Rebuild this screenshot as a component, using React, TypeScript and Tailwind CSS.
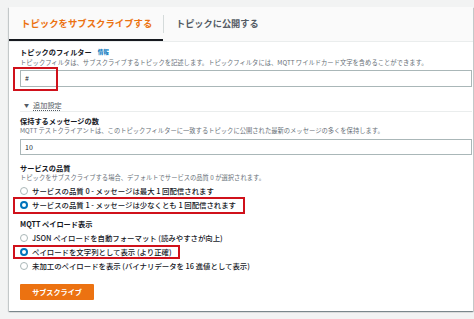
import React from 'react';

const font = { fontFamily: '"Noto Sans CJK JP", "Noto Sans", sans-serif' };

const Radio: React.FC<{ checked?: boolean; label: string }> = ({ checked, label }) => (
  <div className="flex h-[14px] items-center">
    {checked ? (
      <span className="box-border h-[8px] w-[8px] rounded-full border-[2.5px] border-[#0073bb] bg-white" />
    ) : (
      <span className="box-border h-[8px] w-[8px] rounded-full border border-[#aab7b8] bg-white" />
    )}
    <span className="ml-[4px] text-[7.4px] font-medium leading-[10px] text-[#16191f]">{label}</span>
  </div>
);

const App: React.FC = () => {
  return (
    <div className="h-[319px] w-[474px] overflow-hidden bg-[#f2f3f3] pt-[7px] pl-[9px] pr-[1px]" style={font}>
      <div className="bg-white shadow-[0_1px_1px_0_rgba(0,28,36,0.3),1px_1px_1px_0_rgba(0,28,36,0.15),-1px_1px_1px_0_rgba(0,28,36,0.15)]">
        {/* tabs */}
        <div className="flex h-[35px] border-b border-[#eaeded] bg-[#fafafa]">
          <div className="flex h-full w-[154px] items-center border-b-2 border-[#16191f] pl-[12px]">
            <span className="text-[9.4px] font-bold text-[#ec7211]">トピックをサブスクライブする</span>
          </div>
          <div className="my-[8px] w-px bg-[#d5dbdb]" />
          <div className="flex items-center pl-[12px]">
            <span className="text-[9.2px] font-bold text-[#545b64]">トピックに公開する</span>
          </div>
        </div>

        <div className="pl-[11px] pr-[1px] pb-[11px]">
          {/* filter */}
          <div className="flex h-[10px] items-center pt-0 mt-[5px]">
            <span className="text-[7.2px] font-semibold leading-[10px] text-[#16191f]">トピックのフィルター</span>
            <span className="ml-[6px] text-[5.6px] font-bold leading-[10px] text-[#0073bb]">情報</span>
          </div>
          <div className="mt-[1px] text-[6.3px] leading-[10px] text-[#687078]">
            トピックフィルタは、サブスクライブするトピックを記述します。トピックフィルタには、MQTT ワイルドカード文字を含めることができます。
          </div>
          <div className="relative mt-[2px]">
            <div className="flex h-[17px] items-center border border-[#aab7b8] pl-[4px] text-[7px] text-[#16191f]">#</div>
            <span className="absolute left-[-7px] top-[-3px] h-[24px] w-[45px] border-2 border-[#d0111b]" />
          </div>

          {/* additional settings */}
          <div className="mt-[12px] flex h-[13px] items-center border-b border-[#eaeded] pl-[4px]">
            <span className="text-[5px] leading-[10px] text-[#545b64]">▼</span>
            <span className="ml-[4px] text-[7.2px] leading-[10px] text-[#545b64] underline decoration-dotted underline-offset-2">追加設定</span>
          </div>

          <div className="mt-[4px] text-[7.2px] font-semibold leading-[10px] text-[#16191f]">保持するメッセージの数</div>
          <div className="text-[6.3px] leading-[10px] text-[#687078]">
            MQTT テストクライアントは、このトピックフィルターに一致するトピックに公開された最新のメッセージの多くを保持します。
          </div>
          <div className="mt-[3px] flex h-[16px] items-center border border-[#aab7b8] pl-[4px] text-[7px] text-[#16191f]">10</div>

          {/* QoS */}
          <div className="mt-[8px] text-[7.2px] font-semibold leading-[10px] text-[#16191f]">サービスの品質</div>
          <div className="text-[6.3px] leading-[10px] text-[#687078]">
            トピックをサブスクライブする場合、デフォルトでサービスの品質 0 が選択されます。
          </div>
          <div className="mt-[1px]">
            <Radio label="サービスの品質 0 - メッセージは最大 1 回配信されます" />
            <div className="relative">
              <Radio checked label="サービスの品質 1 - メッセージは少なくとも 1 回配信されます" />
              <span className="absolute left-[-7px] top-[-1px] h-[17px] w-[232px] border-2 border-[#d0111b]" />
            </div>
          </div>

          {/* payload */}
          <div className="mt-[7px] text-[7.2px] font-semibold leading-[10px] text-[#16191f]">MQTT ペイロード表示</div>
          <div className="mt-[2px]">
            <Radio label="JSON ペイロードを自動フォーマット (読みやすさが向上)" />
            <div className="relative">
              <Radio checked label="ペイロードを文字列として表示 (より正確)" />
              <span className="absolute left-[-7px] top-[0px] h-[14px] w-[167px] border-2 border-[#d0111b]" />
            </div>
            <Radio label="未加工のペイロードを表示 (バイナリデータを 16 進値として表示)" />
          </div>

          <button className="mt-[11px] flex h-[16px] w-[74px] items-center justify-center rounded-[1px] bg-[#ec7211] text-[7.1px] font-bold text-white">
            サブスクライブ
          </button>
        </div>
      </div>
    </div>
  );
};

export default App;
